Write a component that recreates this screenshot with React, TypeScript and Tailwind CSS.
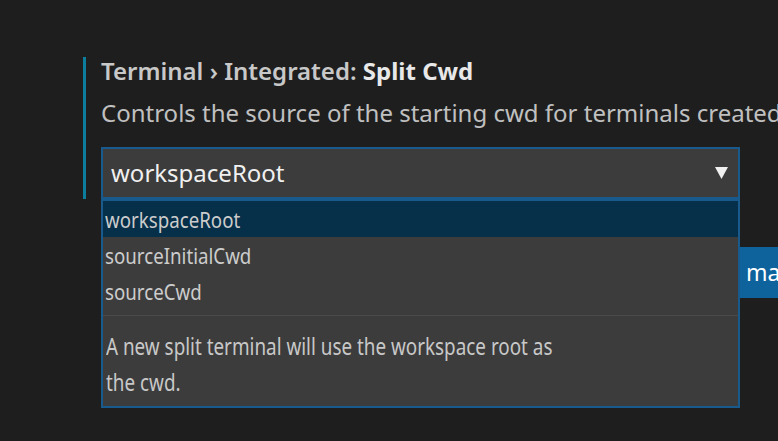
const options = ["workspaceRoot", "sourceInitialCwd", "sourceCwd"];

const font = { fontFamily: '"Noto Sans", "Open Sans", sans-serif' };

export default function App() {
  return (
    <div
      className="relative min-h-screen w-full overflow-hidden bg-[#1e1e1e] pl-[83px] pt-[57px]"
      style={font}
    >
      {/* "ma" button from the next setting, partly under the open dropdown */}
      <div className="absolute left-[740px] top-[247px] flex h-[51px] w-[60px] items-center bg-[#0e639c] pl-[6px] text-[23px] text-white">
        ma
      </div>

      <div className="border-l-[3px] border-[#0c7d9d] pl-[15px]">
        <div className="flex h-[27px] items-center whitespace-nowrap text-[24px] font-semibold text-[#c8c8c8]">
          Terminal › Integrated:&nbsp;<span className="font-bold text-[#e8e8e8]">Split Cwd</span>
        </div>
        <div className="mt-[15px] flex h-[28px] items-center whitespace-nowrap text-[24px] text-[#c0c0c0]">
          Controls the source of the starting cwd for terminals created.
        </div>

        <div className="relative z-10 mt-[20px] w-[639px]">
          <div className="flex h-[52px] items-center justify-between border-2 border-[#185a8c] bg-[#3c3c3c] pl-[8px] pr-[10px]">
            <span className="text-[24px] text-[#f0f0f0]">workspaceRoot</span>
            <svg width="13" height="12" viewBox="0 0 13 12">
              <polygon points="0,0 13,0 6.5,12" fill="#f0f0f0" />
            </svg>
          </div>

          <div className="absolute left-0 top-full w-full border-2 border-[#185a8c] bg-[#3c3c3c]">
            <div className="pb-[6px]">
              {options.map((o, i) => (
                <div
                  key={o}
                  className={`flex h-[36px] items-center pl-[2px] text-[22px] text-[#cccccc] ${
                    i === 0 ? "bg-[#062f4a]" : ""
                  }`}
                >
                  <span className="inline-block origin-left scale-x-[0.85] whitespace-nowrap">{o}</span>
                </div>
              ))}
            </div>
            <div className="h-px bg-[#4a4a4a]" />
            <div className="pb-[6px] pl-[3px] pt-[12px] text-[23px] leading-[36px] text-[#c8c8c8]">
              <div className="origin-left scale-x-[0.82] whitespace-nowrap">
                A new split terminal will use the workspace root as
              </div>
              <div className="origin-left scale-x-[0.82] whitespace-nowrap">the cwd.</div>
            </div>
          </div>
        </div>
      </div>
    </div>
  );
}
